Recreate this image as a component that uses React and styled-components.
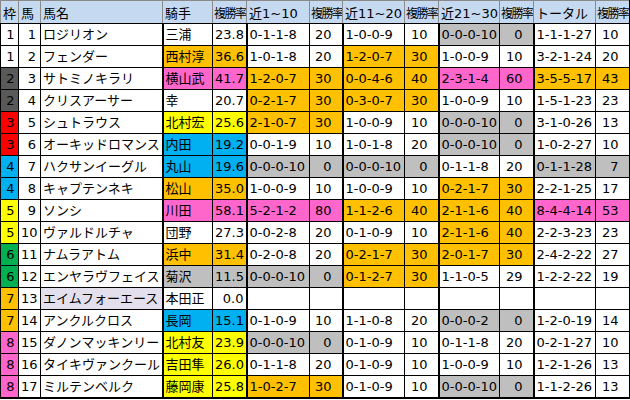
import React from 'react'
import styled, { createGlobalStyle } from 'styled-components'

const Global = createGlobalStyle`
  html, body {
    margin: 0;
    padding: 0;
    background: #fff;
  }
  body {
    font-family: "DejaVu Sans", "Noto Sans CJK JP", sans-serif;
    font-size: 13px;
    color: #000;
  }
`;

const O = '#ffc000';
const P = '#ff66cc';
const G = '#bfbfbf';
const Y = '#ffff00';
const B = '#00b0f0';
const W = '#ffffff';

const WAKU = {
  1: W, 2: '#595959', 3: '#ff0000', 4: B, 5: Y, 6: '#00b050', 7: O, 8: P,
};

const COLS = [18, 22, 122, 50, 34, 63, 33, 62, 34, 61, 34, 62, 34];

// [枠, 馬, 馬名, 騎手, 率, bg, 近1-10, 率, bg, 近11-20, 率, bg, 近21-30, 率, bg, total, 率, bg]
const rows = [
  [1, 1, 'ロジリオン', '三浦', '23.8', W, '0-1-1-8', 20, W, '1-0-0-9', 10, W, '0-0-0-10', 0, G, '1-1-1-27', 10, W],
  [1, 2, 'フェンダー', '西村淳', '36.6', O, '1-0-1-8', 20, W, '1-2-0-7', 30, O, '1-0-0-9', 10, W, '3-2-1-24', 20, W],
  [2, 3, 'サトミノキラリ', '横山武', '41.7', P, '1-2-0-7', 30, O, '0-0-4-6', 40, O, '2-3-1-4', 60, P, '3-5-5-17', 43, O],
  [2, 4, 'クリスアーサー', '幸', '20.7', W, '0-2-1-7', 30, O, '0-3-0-7', 30, O, '1-0-0-9', 10, W, '1-5-1-23', 23, W],
  [3, 5, 'シュトラウス', '北村宏', '25.6', Y, '2-1-0-7', 30, O, '1-0-0-9', 10, W, '0-0-0-10', 0, G, '3-1-0-26', 13, W],
  [3, 6, 'オーキッドロマンス', '内田', '19.2', B, '0-0-1-9', 10, W, '1-0-1-8', 20, W, '0-0-0-10', 0, G, '1-0-2-27', 10, W],
  [4, 7, 'ハクサンイーグル', '丸山', '19.6', B, '0-0-0-10', 0, G, '0-0-0-10', 0, G, '0-1-1-8', 20, W, '0-1-1-28', 7, G],
  [4, 8, 'キャプテンネキ', '松山', '35.0', O, '1-0-0-9', 10, W, '1-0-0-9', 10, W, '0-2-1-7', 30, O, '2-2-1-25', 17, W],
  [5, 9, 'ソンシ', '川田', '58.1', P, '5-2-1-2', 80, P, '1-1-2-6', 40, O, '2-1-1-6', 40, O, '8-4-4-14', 53, P],
  [5, 10, 'ヴァルドルチャ', '団野', '27.3', W, '0-0-2-8', 20, W, '0-1-0-9', 10, W, '2-1-1-6', 40, O, '2-2-3-23', 23, W],
  [6, 11, 'ナムラアトム', '浜中', '31.4', O, '0-2-0-8', 20, W, '0-2-1-7', 30, O, '2-0-1-7', 30, O, '2-4-2-22', 27, W],
  [6, 12, 'エンヤラヴフェイス', '菊沢', '11.5', G, '0-0-0-10', 0, G, '0-1-2-7', 30, O, '1-1-0-5', 29, W, '1-2-2-22', 19, W],
  [7, 13, 'エイムフォーエース', '本田正', '0.0', W, '', '', W, '', '', W, '', '', W, '', '', W],
  [7, 14, 'アンクルクロス', '長岡', '15.1', B, '0-1-0-9', 10, W, '1-1-0-8', 20, W, '0-0-0-2', 0, G, '1-2-0-19', 14, W],
  [8, 15, 'ダノンマッキンリー', '北村友', '23.9', Y, '0-0-0-10', 0, G, '0-1-0-9', 10, W, '0-1-1-8', 20, W, '0-2-1-27', 10, W],
  [8, 16, 'タイキヴァンクール', '吉田隼', '26.0', Y, '0-1-1-8', 20, W, '0-1-0-9', 10, W, '1-0-0-9', 10, W, '1-2-1-26', 13, W],
  [8, 17, 'ミルテンベルク', '藤岡康', '25.8', Y, '1-0-2-7', 30, O, '0-1-0-9', 10, W, '0-0-0-10', 0, G, '1-1-2-26', 13, W],
];

const Sheet = styled.table`
  border-collapse: collapse;
  table-layout: fixed;
  width: 630px;
  border-right: 2px solid #000;
  border-bottom: 2px solid #000;
`;

const Head = styled.th`
  height: 22px;
  padding: 0 0 0 ${p => (p.$tight ? 1 : 2)}px;
  background: #c5d9f1;
  border: 1px solid #8a8a8a;
  border-bottom: 1px solid #000;
  font-weight: normal;
  font-size: ${p => (p.$tight ? 12 : 13)}px;
  letter-spacing: ${p => (p.$tight ? '-1.5px' : '0')};
  text-align: left;
  white-space: nowrap;
  overflow: hidden;
`;

const Cell = styled.td`
  height: 21px;
  padding: 0 ${p => p.$pr ?? 2}px 0 2px;
  background: ${p => p.$bg || '#fff'};
  color: ${p => p.$ink || '#000'};
  border: 1px solid #000;
  border-left-width: ${p => (p.$thick ? 2 : 1)}px;
  text-align: ${p => p.$align || 'left'};
  white-space: nowrap;
  overflow: hidden;
  line-height: 20px;
`;

const headers = [
  ['枠'], ['馬'], ['馬名'], ['騎手'], ['複勝率', true], ['近1~10'], ['複勝率', true],
  ['近11~20'], ['複勝率', true], ['近21~30'], ['複勝率', true], ['トータル'], ['複勝率', true],
];

function Block({ rec, rate, bg, thick }) {
  return (
    <>
      <Cell $bg={bg} $thick={thick}>{rec}</Cell>
      <Cell $bg={bg} $align="right" $pr={10}>{rate}</Cell>
    </>
  )
}

export default function App() {
  return (
    <>
      <Global />
      <Sheet>
        <colgroup>
          {COLS.map((w, i) => <col key={i} style={{ width: w }} />)}
        </colgroup>
        <thead>
          <tr>
            {headers.map(([t, tight], i) => <Head key={i} $tight={tight}>{t}</Head>)}
          </tr>
        </thead>
        <tbody>
          {rows.map(r => (
            <tr key={r[1]}>
              <Cell $bg={WAKU[r[0]]} $align="center" $pr={0}>{r[0]}</Cell>
              <Cell $align="right" $pr={4}>{r[1]}</Cell>
              <Cell $bg={r[1] === 13 ? '#e4dfec' : W}>{r[2]}</Cell>
              <Cell $bg={r[5]} $thick>{r[3]}</Cell>
              <Cell $bg={r[5]} $align="right" $pr={2}>{r[4]}</Cell>
              <Block rec={r[6]} rate={r[7]} bg={r[8]} thick />
              <Block rec={r[9]} rate={r[10]} bg={r[11]} thick />
              <Block rec={r[12]} rate={r[13]} bg={r[14]} thick />
              <Block rec={r[15]} rate={r[16]} bg={r[17]} thick />
            </tr>
          ))}
        </tbody>
      </Sheet>
    </>
  )
}
